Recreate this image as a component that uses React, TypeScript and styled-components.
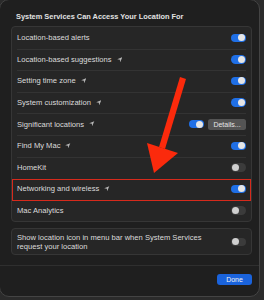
import styled, { createGlobalStyle, css } from 'styled-components';

const GlobalStyle = createGlobalStyle`
  html, body {
    margin: 0;
    padding: 0;
    background: #2b2b2b;
  }
  body {
    font-family: 'Liberation Sans', Arial, sans-serif;
    -webkit-font-smoothing: antialiased;
  }
`;

type Service = {
  label: string;
  on: boolean;
  arrow?: boolean;
  details?: boolean;
  highlighted?: boolean;
};

const services: Service[] = [
  { label: 'Location-based alerts', on: true },
  { label: 'Location-based suggestions', on: true, arrow: true },
  { label: 'Setting time zone', on: true, arrow: true },
  { label: 'System customization', on: true, arrow: true },
  { label: 'Significant locations', on: true, arrow: true, details: true },
  { label: 'Find My Mac', on: true, arrow: true },
  { label: 'HomeKit', on: false },
  { label: 'Networking and wireless', on: true, arrow: true, highlighted: true },
  { label: 'Mac Analytics', on: false },
];

function LocationArrow() {
  return (
    <ArrowIcon viewBox="0 0 10 10">
      <path d="M9.6 0.4 L0.4 4.3 L5.2 4.8 L5.7 9.6 Z" fill="#b4b4b4" />
    </ArrowIcon>
  );
}

function App() {
  return (
    <>
      <GlobalStyle />
      <Window>
        <Title>System Services Can Access Your Location For</Title>
        <Card>
          {services.map((s) => (
            <Row key={s.label} highlighted={s.highlighted}>
              <Label>
                {s.label}
                {s.arrow && <LocationArrow />}
              </Label>
              <Controls>
                <Toggle on={s.on} />
                {s.details && <DetailsButton>Details...</DetailsButton>}
              </Controls>
            </Row>
          ))}
        </Card>
        <Card>
          <Row tall>
            <Label>
              Show location icon in menu bar when System Services
              <br />
              request your location
            </Label>
            <Toggle on={false} />
          </Row>
        </Card>
        <Footer>
          <DoneButton>Done</DoneButton>
        </Footer>
        <Annotation viewBox="0 0 264 300">
          <path d="M180 77 L186 79 L165 149 L159 147 Z" fill="#fb2a0c" />
          <path d="M147 143 L178 153 L154 173 Z" fill="#fb2a0c" />
        </Annotation>
      </Window>
    </>
  );
}

const Window = styled.div`
  position: relative;
  box-sizing: border-box;
  width: 261px;
  height: 298px;
  margin-left: -1px;
  margin-top: -1px;
  background: #1f1f1f;
  border: 1px solid #444;
  border-radius: 10px;
  display: flex;
  flex-direction: column;
  padding: 0 0 0 11px;
  overflow: hidden;
`;

const Title = styled.div`
  font-size: 7.4px;
  font-weight: bold;
  color: #e2e2e2;
  height: 27px;
  padding-left: 5px;
  line-height: 33px;
  box-sizing: border-box;
  margin-bottom: -1px;
`;

const Card = styled.div`
  width: 241px;
  box-sizing: border-box;
  background: #262626;
  border: 1px solid #363636;
  border-radius: 4px;
  margin-bottom: 6px;
`;

const Row = styled.div<{ highlighted?: boolean; tall?: boolean }>`
  position: relative;
  height: 21.6px;
  display: flex;
  align-items: center;
  justify-content: space-between;
  padding: 0 5px 0 5px;

  & + &::before {
    content: '';
    position: absolute;
    top: 0;
    left: 5px;
    right: 5px;
    height: 1px;
    background: #333;
  }

  ${(p) =>
    p.tall &&
    css`
      height: 25px;
    `}

  ${(p) =>
    p.highlighted &&
    css`
      &::after {
        content: '';
        position: absolute;
        left: 0;
        right: 0;
        top: 1px;
        bottom: -1px;
        border: 1.5px solid #d62a1c;
      }
    `}
`;

const Label = styled.div`
  font-size: 7.6px;
  color: #dcdcdc;
  line-height: 9.3px;
  display: flex;
  align-items: center;
  flex-wrap: wrap;
`;

const ArrowIcon = styled.svg`
  width: 5.5px;
  height: 5.5px;
  margin-left: 5px;
`;

const Controls = styled.div`
  display: flex;
  align-items: center;
  gap: 4px;
`;

const Toggle = styled.div<{ on: boolean }>`
  position: relative;
  width: 15px;
  height: 8.5px;
  border-radius: 5px;
  background: ${(p) => (p.on ? '#1f6fe6' : '#3b3b3b')};

  &::after {
    content: '';
    position: absolute;
    top: 0.75px;
    ${(p) => (p.on ? 'right: 0.75px;' : 'left: 0.75px;')}
    width: 7px;
    height: 7px;
    border-radius: 50%;
    background: ${(p) => (p.on ? '#e6e6e6' : '#cfcfcf')};
  }
`;

const DetailsButton = styled.div`
  width: 38px;
  height: 11px;
  border-radius: 2.5px;
  background: #545454;
  color: #e6e6e6;
  font-size: 7px;
  line-height: 11px;
  text-align: center;
`;

const Footer = styled.div`
  margin: 4px 0 0 -11px;
  border-top: 1px solid #2f2f2f;
  display: flex;
  justify-content: flex-end;
  padding: 8px 7px 0 0;
`;

const DoneButton = styled.div`
  width: 35px;
  height: 11px;
  border-radius: 3px;
  background: #1a63dc;
  color: #f2f2f2;
  font-size: 7px;
  line-height: 11px;
  text-align: center;
`;

const Annotation = styled.svg`
  position: absolute;
  left: 0;
  top: 0;
  width: 264px;
  height: 300px;
  pointer-events: none;
`;

export default App;
